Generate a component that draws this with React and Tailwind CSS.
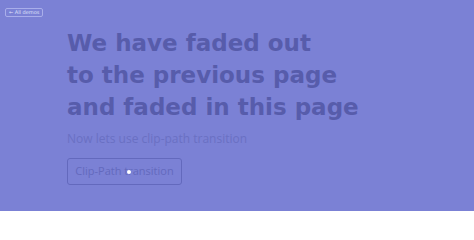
import React from "react";

const App = () => {
  return (
    <div className="w-[474px] h-[211px] bg-[#7b81d5] relative overflow-hidden font-['DejaVu_Sans',sans-serif]">
      <div className="absolute left-[5px] top-[8px] border border-[#a9aeea] rounded-[2px] px-[3px] h-[9px] flex items-center text-[5px] leading-none text-[#dfe1fa]">
        ← All demos
      </div>

      <div className="pl-[67px] pt-[27px]">
        <h1 className="text-[23px] leading-[32px] font-bold text-[#575cab]">
          We have faded out
          <br />
          to the previous page
          <br />
          and faded in this page
        </h1>
        <p className="mt-[9px] text-[12px] leading-[14px] text-[#6a70c3] font-['Open_Sans',sans-serif]">
          Now lets use clip-path transition
        </p>
        <button className="mt-[12px] w-[115px] h-[27px] border border-[#6369bd] rounded-[3px] text-[11px] text-[#6369bd] font-['Open_Sans',sans-serif] relative">
          Clip-Path transition
          <span className="absolute left-[59px] top-[11px] w-[4px] h-[4px] rounded-full bg-white" />
        </button>
      </div>
    </div>
  );
};

export default App;
